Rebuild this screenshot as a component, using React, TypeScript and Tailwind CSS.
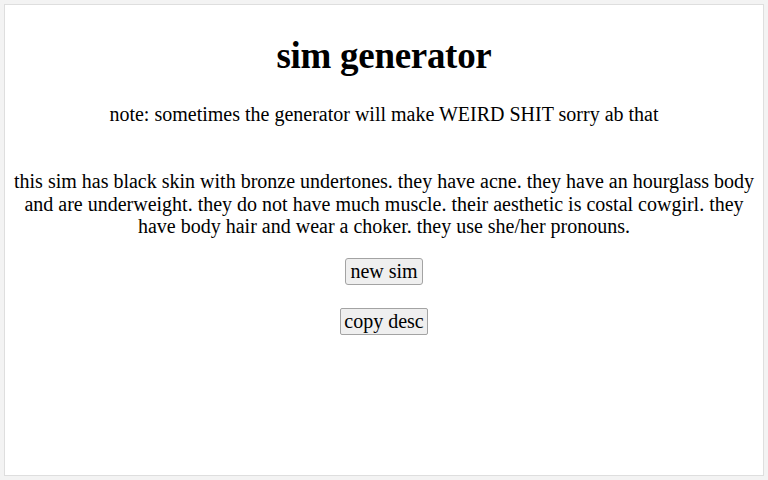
import { useState } from 'react';

const desc =
  'this sim has black skin with bronze undertones. they have acne. they have an hourglass body and are underweight. they do not have much muscle. their aesthetic is costal cowgirl. they have body hair and wear a choker. they use she/her pronouns.';

export default function App() {
  const [text] = useState(desc);

  return (
    <div className="min-h-screen bg-[#f3f3f3] p-1 font-['Liberation_Serif',serif] text-black">
      <div className="h-[472px] border border-[#dedede] bg-white px-[6px] text-center">
        <h1 className="mt-[30px] text-[37px] font-bold leading-[42px] tracking-[-0.3px]">sim generator</h1>
        <p className="mt-[26px] text-[20px] leading-[23px]">
          note: sometimes the generator will make WEIRD SHIT sorry ab that
        </p>
        <p className="mt-[44px] text-[20px] leading-[22.5px]">{text}</p>
        <div className="mt-[20px]">
          <button className="rounded-[3px] border border-[#a3a3a3] bg-[#efefef] px-[4px] py-px text-[20px] leading-[23px]">
            new sim
          </button>
        </div>
        <div className="mt-[23px]">
          <button className="rounded-[2px] border border-[#a3a3a3] bg-[#efefef] px-[3px] py-px text-[20px] leading-[23px]">
            copy desc
          </button>
        </div>
      </div>
    </div>
  );
}
